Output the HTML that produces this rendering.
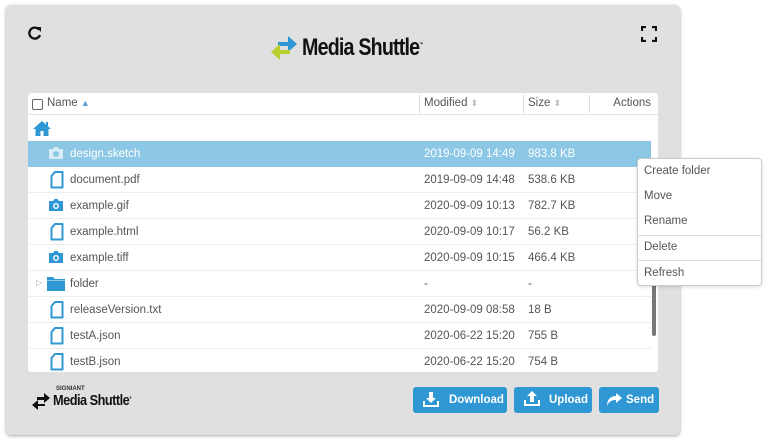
<!DOCTYPE html>
<html><head><style>
*{box-sizing:border-box;margin:0;padding:0}
body{width:768px;height:441px;background:#fff;font-family:"Liberation Sans",sans-serif;position:relative;overflow:hidden;color:#555}
.panel{position:absolute;left:6px;top:5px;width:674px;height:430px;background:#e0e0e0;border-radius:5px;box-shadow:0 1px 3px rgba(0,0,0,.35)}
.table{position:absolute;left:28px;top:93px;width:630px;height:279px;background:#fff;border-radius:3px;overflow:hidden}
.hdr{position:absolute;left:0;top:0;width:630px;height:22px;border-bottom:1px solid #e4e4e4;font-size:11.5px;color:#555}
.hdr span{position:absolute;top:4px}
.sep{position:absolute;top:2px;width:1px;height:18px;background:#ddd}
.row{position:absolute;left:0;width:623px;height:26px;border-bottom:1px solid #eee;font-size:11.5px;color:#555}
.row.sel{background:#8cc8e6;color:#fff;border-bottom:none}
.row span{position:absolute;top:7px}
.n{left:42px}.m{left:396px}.s{left:500px}
.ic{position:absolute;left:20px;top:4px}
.menu{position:absolute;left:637px;top:158px;width:125px;height:128px;background:#fff;border:1px solid #ccc;border-radius:4px;box-shadow:0 1px 3px rgba(0,0,0,.15);font-size:11.5px;color:#555}
.menu div{position:absolute;left:6px}
.menu hr{position:absolute;left:0;width:123px;border:none;border-top:1px solid #ddd}
.btn{position:absolute;top:387px;height:26px;background:#2f97d3;border-radius:3px;color:#fff;font-weight:bold;font-size:11.5px}
.btn span{position:absolute;top:7px}
.ar{position:static!important;font-size:9px}
</style></head><body>
<div class="panel"></div>
<svg style="position:absolute;left:27px;top:25px" width="16" height="16" viewBox="0 0 16 16"><path d="M12 4.5A5.5 5.5 0 1 0 13 10" fill="none" stroke="#111" stroke-width="2.3"/><path d="M9 2h5v5z" fill="#111"/></svg>
<svg style="position:absolute;left:641px;top:26px" width="16" height="16" viewBox="0 0 16 16"><path d="M1 5V1h4M11 1h4v4M15 11v4h-4M5 15H1v-4" fill="none" stroke="#111" stroke-width="2.2"/></svg>
<svg style="position:absolute;left:268px;top:34px" width="32" height="28" viewBox="0 0 32 28"><path d="M10 8h10V2l9 8-9 8v-6H10z" fill="#2f97d3"/><path d="M22 16H12v-6L3 18l9 8v-6h10z" fill="#b8cf2f"/></svg>
<div style="position:absolute;left:302px;top:34px;font-size:24px;font-weight:bold;color:#111;letter-spacing:-1px;transform:scaleX(.82);transform-origin:left">Media Shuttle<sup style="font-size:5px">™</sup></div>

<div class="table">
<div class="hdr">
<svg style="position:absolute;left:4px;top:6px" width="11" height="11"><rect x=".5" y=".5" width="10" height="10" rx="1.5" fill="#fff" stroke="#666"/></svg>
<span style="left:19px">Name <span class="ar" style="color:#5a9fd6">▲</span></span>
<div class="sep" style="left:391px"></div><span style="left:396px">Modified <span class="ar" style="color:#bbb">⬍</span></span>
<div class="sep" style="left:495px"></div><span style="left:500px">Size <span class="ar" style="color:#bbb">⬍</span></span>
<div class="sep" style="left:561px"></div><span style="right:7px">Actions</span>
</div>
<svg style="position:absolute;left:5px;top:27px" width="18" height="16" viewBox="0 0 18 16"><path d="M9 1L0 9h2.5v7h5v-5h3v5h5V9H18z" fill="#2f97d3"/><rect x="13" y="2" width="2" height="4" fill="#2f97d3"/></svg>
</div>
<div style="position:absolute;left:28px;top:93px;width:630px;height:279px">
<div class="row sel" style="top:48px"><svg class="ic" width="16" height="16" viewBox="0 0 16 16"><path d="M1 4h4l1.5-2h3L11 4h4v10H1z" fill="#d8ecf7"/><circle cx="8" cy="9" r="3" fill="#8cc8e6"/></svg><span class="n">design.sketch</span><span class="m">2019-09-09 14:49</span><span class="s">983.8 KB</span></div>
<div class="row" style="top:74px"><svg class="ic" style="left:22px" width="14" height="18" viewBox="0 0 14 18"><path d="M5 1h7.5v15.5h-11V5z" fill="none" stroke="#2f97d3" stroke-width="2" stroke-linejoin="round"/></svg><span class="n">document.pdf</span><span class="m">2019-09-09 14:48</span><span class="s">538.6 KB</span></div>
<div class="row" style="top:100px"><svg class="ic" width="16" height="16" viewBox="0 0 16 16"><path d="M1 4h4l1.5-2h3L11 4h4v10H1z" fill="#2f97d3"/><circle cx="8" cy="9" r="3" fill="#fff"/><circle cx="8" cy="9" r="1.6" fill="#2f97d3"/></svg><span class="n">example.gif</span><span class="m">2020-09-09 10:13</span><span class="s">782.7 KB</span></div>
<div class="row" style="top:126px"><svg class="ic" style="left:22px" width="14" height="18" viewBox="0 0 14 18"><path d="M5 1h7.5v15.5h-11V5z" fill="none" stroke="#2f97d3" stroke-width="2" stroke-linejoin="round"/></svg><span class="n">example.html</span><span class="m">2020-09-09 10:17</span><span class="s">56.2 KB</span></div>
<div class="row" style="top:152px"><svg class="ic" width="16" height="16" viewBox="0 0 16 16"><path d="M1 4h4l1.5-2h3L11 4h4v10H1z" fill="#2f97d3"/><circle cx="8" cy="9" r="3" fill="#fff"/><circle cx="8" cy="9" r="1.6" fill="#2f97d3"/></svg><span class="n">example.tiff</span><span class="m">2020-09-09 10:15</span><span class="s">466.4 KB</span></div>
<div class="row" style="top:178px"><span style="left:8px;top:7px;font-size:8px;color:#aaa">▷</span><svg class="ic" style="left:19px;top:5px" width="18" height="15" viewBox="0 0 18 15"><path d="M0 1h6l2 2h10v12H0z" fill="#2f97d3"/><rect x="0" y="4" width="18" height="1" fill="#8cc8e6"/></svg><span class="n">folder</span><span class="m">-</span><span class="s">-</span></div>
<div class="row" style="top:204px"><svg class="ic" style="left:22px" width="14" height="18" viewBox="0 0 14 18"><path d="M5 1h7.5v15.5h-11V5z" fill="none" stroke="#2f97d3" stroke-width="2" stroke-linejoin="round"/></svg><span class="n">releaseVersion.txt</span><span class="m">2020-09-09 08:58</span><span class="s">18 B</span></div>
<div class="row" style="top:230px"><svg class="ic" style="left:22px" width="14" height="18" viewBox="0 0 14 18"><path d="M5 1h7.5v15.5h-11V5z" fill="none" stroke="#2f97d3" stroke-width="2" stroke-linejoin="round"/></svg><span class="n">testA.json</span><span class="m">2020-06-22 15:20</span><span class="s">755 B</span></div>
<div class="row" style="top:256px;border-bottom:none"><svg class="ic" style="left:22px" width="14" height="18" viewBox="0 0 14 18"><path d="M5 1h7.5v15.5h-11V5z" fill="none" stroke="#2f97d3" stroke-width="2" stroke-linejoin="round"/></svg><span class="n">testB.json</span><span class="m">2020-06-22 15:20</span><span class="s">754 B</span></div>
<div style="position:absolute;left:624px;top:188px;width:4px;height:55px;background:#777;border-radius:2px"></div>
</div>

<div class="menu">
<div style="top:6px">Create folder</div>
<div style="top:31px">Move</div>
<div style="top:56px">Rename</div>
<hr style="top:76px">
<div style="top:82px">Delete</div>
<hr style="top:101px">
<div style="top:108px">Refresh</div>
</div>

<svg style="position:absolute;left:31px;top:392px" width="20" height="18" viewBox="0 0 20 18"><path d="M6 5h7V1l6 5-6 5V8H6z" fill="#111"/><path d="M14 12H7V8l-6 5 6 5v-4h7z" fill="#111"/></svg>
<div style="position:absolute;left:56px;top:386px;font-size:6px;font-weight:bold;color:#333">SIGNIANT</div>
<div style="position:absolute;left:53px;top:392px;font-size:15px;font-weight:bold;color:#111;letter-spacing:-.6px;transform:scaleX(.85);transform-origin:left">Media Shuttle<sup style="font-size:4px">®</sup></div>

<div class="btn" style="left:413px;width:94px"><svg style="position:absolute;left:9px;top:5px" width="18" height="16" viewBox="0 0 18 16"><path d="M7 0h4v6h3l-5 5-5-5h3z" fill="#fff"/><path d="M1 9v6h16V9h-2v4H3V9z" fill="#fff"/></svg><span style="left:36px">Download</span></div>
<div class="btn" style="left:514px;width:78px"><svg style="position:absolute;left:9px;top:4px" width="18" height="16" viewBox="0 0 18 16"><path d="M9 0l5 5h-3v6H7V5H4z" fill="#fff"/><path d="M1 9v6h16V9h-2v4H3V9z" fill="#fff"/></svg><span style="left:35px">Upload</span></div>
<div class="btn" style="left:599px;width:60px"><svg style="position:absolute;left:7px;top:6px" width="16" height="14" viewBox="0 0 16 14"><path d="M10 0l6 5-6 5V7C6 7 3 8 1 13 1 7 4 3 10 3z" fill="#fff"/></svg><span style="left:27px">Send</span></div>
</body></html>
